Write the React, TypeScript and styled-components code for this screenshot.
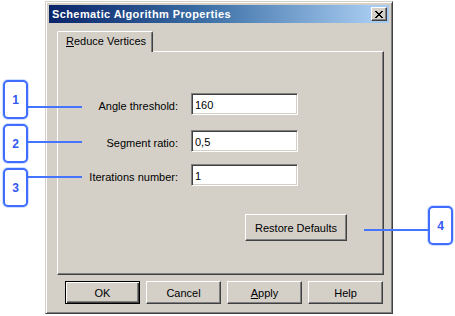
import React from 'react';
import styled, { createGlobalStyle } from 'styled-components';

const GlobalStyle = createGlobalStyle`
    html, body {
        margin: 0;
        padding: 0;
        background: #ffffff;
    }
    * {
        box-sizing: border-box;
    }
`;

function CloseGlyph() {
  // Marlett-style 8x7 cross
  return (
    <svg width="8" height="7" viewBox="0 0 8 7" shapeRendering="crispEdges">
      <path
        d="M0 0h2v1H0zM6 0h2v1H6zM1 1h2v1H1zM5 1h2v1H5zM2 2h4v1H2zM3 3h2v1H3zM2 4h4v1H2zM1 5h2v1H1zM5 5h2v1H5zM0 6h2v1H0zM6 6h2v1H6z"
        fill="#000"
      />
    </svg>
  );
}

const fields = [
  { label: 'Angle threshold:', value: '160', top: 41 },
  { label: 'Segment ratio:', value: '0,5', top: 15 },
  { label: 'Iterations number:', value: '1', top: 12 },
];

const leftCallouts = [
  { n: '1', lineTop: 24 },
  { n: '2', lineTop: 15 },
  { n: '3', lineTop: 6 },
];

function App() {
  return (
    <>
      <GlobalStyle />
      <Page>
        <LeftRail>
          {leftCallouts.map((c) => (
            <Callout key={c.n}>
              {c.n}
              <CalloutLine $top={c.lineTop} $len={54} $side="right" />
            </Callout>
          ))}
        </LeftRail>

        <Window>
          <TitleBar>
            <Title>Schematic Algorithm Properties</Title>
            <CloseButton>
              <CloseGlyph />
            </CloseButton>
          </TitleBar>

          <Body>
            <TabStrip>
              <Tab>
                <u>R</u>educe Vertices
              </Tab>
            </TabStrip>
            <Panel>
              {fields.map((f) => (
                <FieldRow key={f.label} $top={f.top}>
                  <Label>{f.label}</Label>
                  <TextBox readOnly value={f.value} />
                </FieldRow>
              ))}
              <RestoreRow>
                <Button $w={102} $h={27}>Restore Defaults</Button>
              </RestoreRow>
            </Panel>
            <ButtonRow>
              <Button $default>OK</Button>
              <Button>Cancel</Button>
              <Button>
                <u>A</u>pply
              </Button>
              <Button>Help</Button>
            </ButtonRow>
          </Body>
        </Window>

        <RightRail>
          <Callout>
            4
            <CalloutLine $top={21} $len={64} $side="left" />
          </Callout>
        </RightRail>
      </Page>
    </>
  );
}

export default App;

const Page = styled.div`
    display: flex;
    align-items: flex-start;
    width: 455px;
    height: 316px;
    background: #ffffff;
    font-family: "Liberation Sans", Arial, sans-serif;
    font-size: 11px;
    color: #000000;
    overflow: hidden;
`;

const LeftRail = styled.div`
    position: relative;
    z-index: 2;
    width: 45px;
    flex: none;
    display: flex;
    flex-direction: column;
    gap: 5px;
    padding: 80px 0 0 3px;
`;

const RightRail = styled.div`
    position: relative;
    z-index: 2;
    flex: none;
    padding: 206px 0 0 35px;
`;

const Callout = styled.div`
    position: relative;
    width: 25px;
    height: 39px;
    border: 2px solid #3f6dff;
    border-radius: 5px;
    background: #ffffff;
    display: flex;
    align-items: center;
    justify-content: center;
    color: #3158f0;
    font-family: "Liberation Sans", Arial, sans-serif;
    font-weight: bold;
    font-size: 12px;
    box-shadow: 0 0 0 1px rgba(120, 160, 255, 0.35);
`;

const CalloutLine = styled.span<{ $top: number; $len: number; $side: 'left' | 'right' }>`
    position: absolute;
    top: ${(p) => p.$top}px;
    ${(p) => (p.$side === 'right' ? 'left' : 'right')}: calc(100% + 2px);
    width: ${(p) => p.$len}px;
    height: 2px;
    background: #4574ff;
`;

const Window = styled.div`
    flex: none;
    margin-top: 1px;
    width: 348px;
    height: 313px;
    background: #d4d0c8;
    border: 1px solid;
    border-color: #d4d0c8 #404040 #404040 #d4d0c8;
    box-shadow: inset 1px 1px #ffffff, inset -1px -1px #808080;
    padding: 3px;
    display: flex;
    flex-direction: column;
`;

const TitleBar = styled.div`
    height: 18px;
    flex: none;
    display: flex;
    align-items: center;
    justify-content: space-between;
    padding: 0 2px 0 3px;
    background: linear-gradient(to right, #0a246a 0%, #3a6ea5 45%, #a6caf0 95%);
`;

const Title = styled.span`
    color: #ffffff;
    font-weight: bold;
    font-size: 11px;
    letter-spacing: 0.4px;
    white-space: nowrap;
`;

const CloseButton = styled.div`
    width: 16px;
    height: 14px;
    display: flex;
    align-items: center;
    justify-content: center;
    background: #d4d0c8;
    border: 1px solid;
    border-color: #ffffff #404040 #404040 #ffffff;
    box-shadow: inset -1px -1px #808080;
    padding-right: 1px;
`;

const Body = styled.div`
    flex: 1;
    display: flex;
    flex-direction: column;
    padding: 8px 5px 0 8px;
`;

const TabStrip = styled.div`
    display: flex;
    height: 20px;
    position: relative;
    z-index: 1;
`;

const Tab = styled.div`
    width: 96px;
    height: 21px;
    padding: 3px 0 0 8px;
    background: #d4d0c8;
    border-top: 1px solid #ffffff;
    border-left: 1px solid #ffffff;
    border-right: 1px solid #404040;
    border-top-left-radius: 2px;
    border-top-right-radius: 2px;
    box-shadow: inset -1px 0 #808080;
    white-space: nowrap;
`;

const Panel = styled.div`
    width: 327px;
    height: 224px;
    flex: none;
    border: 1px solid;
    border-color: #ffffff #404040 #404040 #ffffff;
    box-shadow: inset -1px -1px #808080;
    display: flex;
    flex-direction: column;
`;

const FieldRow = styled.div<{ $top: number }>`
    display: grid;
    grid-template-columns: 120px 107px;
    column-gap: 13px;
    align-items: center;
    margin-top: ${(p) => p.$top}px;
`;

const Label = styled.span`
    text-align: right;
    padding-top: 3px;
    white-space: nowrap;
`;

const TextBox = styled.input`
    width: 107px;
    height: 22px;
    margin: 0;
    padding: 1px 3px 0;
    background: #ffffff;
    border: 1px solid;
    border-color: #808080 #ffffff #ffffff #808080;
    box-shadow: inset 1px 1px #404040, inset -1px -1px #d4d0c8;
    font-family: "Liberation Sans", Arial, sans-serif;
    font-size: 11px;
    color: #000000;
    outline: none;
`;

const RestoreRow = styled.div`
    display: flex;
    justify-content: flex-end;
    padding-right: 36px;
    margin-top: 28px;
`;

const ButtonRow = styled.div`
    display: flex;
    gap: 6px;
    margin-top: 6px;
    padding-left: 8px;
`;

const Button = styled.div<{ $default?: boolean; $w?: number; $h?: number }>`
    width: ${(p) => p.$w ?? 75}px;
    height: ${(p) => p.$h ?? 23}px;
    display: flex;
    align-items: center;
    justify-content: center;
    background: #d4d0c8;
    white-space: nowrap;
    border: 1px solid;
    ${(p) =>
      p.$default
        ? `border-color: #000000;
           box-shadow: inset 1px 1px #ffffff, inset -1px -1px #404040, inset -2px -2px #808080;`
        : `border-color: #ffffff #404040 #404040 #ffffff;
           box-shadow: inset -1px -1px #808080;`}
`;
